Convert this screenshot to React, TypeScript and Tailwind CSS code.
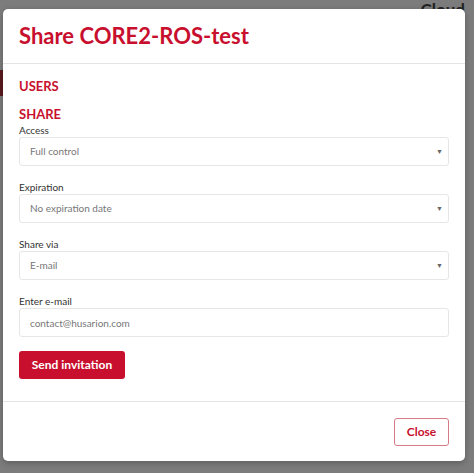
import React from "react";

function SelectBox({ value }: { value: string }) {
  return (
    <div className="flex h-[29px] items-center justify-between rounded-[3px] border border-[#e6e6e6] bg-white pl-[10px] pr-[5px] text-[10px] text-[#777]">
      <span>{value}</span>
      <span className="text-[7px] text-[#666]">▼</span>
    </div>
  );
}

function Field({ label, children }: { label: string; children: React.ReactNode }) {
  return (
    <div className="flex flex-col">
      <label className="text-[10px] leading-[14px] text-[#333]">{label}</label>
      {children}
    </div>
  );
}

export default function App() {
  return (
    <div
      className="relative h-[473px] w-[474px] overflow-hidden bg-[#7c7c7c]"
      style={{ fontFamily: "Lato, 'Open Sans', sans-serif" }}
    >
      {/* page behind the overlay */}
      <div className="absolute right-[9px] top-[-3px] text-[17px] font-bold text-[#222]">Cloud</div>
      <div className="absolute left-0 top-[70px] h-[26px] w-[4px] bg-[#5a1a1f]" />

      <div className="absolute left-[3px] top-[9px] flex h-[452px] w-[462px] flex-col rounded-[5px] bg-white shadow-[0_2px_6px_rgba(0,0,0,0.25)]">
        <div className="flex h-[55px] items-center border-b border-[#e5e5e5] px-[16px]">
          <h1 className="text-[22px] font-bold leading-none text-[#c8102e]">Share CORE2-ROS-test</h1>
        </div>

        <div className="flex flex-1 flex-col px-[16px] pt-[13px]">
          <h2 className="text-[13px] font-bold leading-[18px] text-[#c8102e]">USERS</h2>
          <h2 className="mt-[10px] text-[13px] font-bold leading-[18px] text-[#c8102e]">SHARE</h2>
          <div className="flex flex-col gap-[14px]">
            <Field label="Access">
              <SelectBox value="Full control" />
            </Field>
            <Field label="Expiration">
              <SelectBox value="No expiration date" />
            </Field>
            <Field label="Share via">
              <SelectBox value="E-mail" />
            </Field>
            <Field label="Enter e-mail">
              <input
                className="h-[29px] rounded-[3px] border border-[#e6e6e6] px-[10px] text-[10px] text-[#777] outline-none"
                defaultValue="contact@husarion.com"
              />
            </Field>
          </div>
          <button className="mt-[14px] h-[28px] w-[106px] rounded-[3px] bg-[#c8102e] text-[12px] font-bold text-white">
            Send invitation
          </button>
        </div>

        <div className="flex h-[60px] items-center justify-end border-t border-[#e5e5e5] px-[16px]">
          <button className="h-[28px] w-[55px] rounded-[3px] border border-[#d77a88] bg-white text-[12px] font-bold text-[#c8102e]">
            Close
          </button>
        </div>
      </div>
    </div>
  );
}
